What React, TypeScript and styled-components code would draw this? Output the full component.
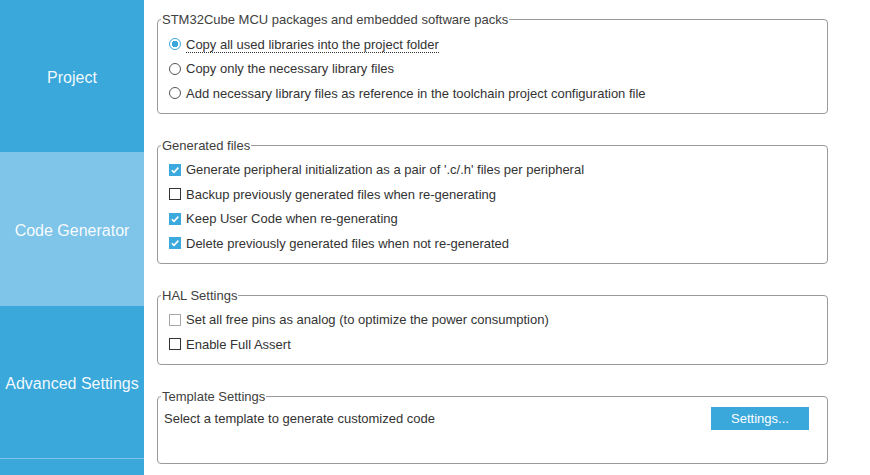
import React from 'react';
import styled, { createGlobalStyle } from 'styled-components';

const GlobalStyle = createGlobalStyle`
  html, body {
    margin: 0;
    padding: 0;
    background: #ffffff;
    font-family: "Liberation Sans", Arial, sans-serif;
  }
`;

const BLUE = '#3aa8db';
const LIGHT_BLUE = '#7fc5e9';

const Page = styled.div`
  display: flex;
  width: 870px;
  height: 475px;
  overflow: hidden;
`;

const Sidebar = styled.nav`
  flex: 0 0 144px;
  display: flex;
  flex-direction: column;
  background: ${BLUE};
`;

const Tab = styled.div<{ $active?: boolean }>`
  flex: 0 0 153px;
  box-sizing: border-box;
  display: flex;
  align-items: center;
  justify-content: center;
  padding-top: 4px;
  background: ${(p) => (p.$active ? LIGHT_BLUE : BLUE)};
  border-bottom: 1px solid ${LIGHT_BLUE};
  color: rgba(255, 255, 255, 0.95);
  font-size: 16px;
  white-space: nowrap;
`;

const Content = styled.main`
  flex: 1;
  display: flex;
  flex-direction: column;
  gap: 24px;
  padding: 12px 42px 0 13px;
  border-top: 1px solid ${BLUE};
  margin-top: -1px;
`;

const Group = styled.fieldset`
  margin: 0;
  padding: 0;
  min-width: 0;
  border: 1px solid #9a9a9a;
  border-radius: 4px;
`;

const Legend = styled.legend`
  margin-left: 3px;
  padding: 0 1px;
  font-size: 13px;
  line-height: 15px;
  color: #404040;
`;

const Body = styled.div`
  padding: 5px 11px 7px;
`;

const TemplateBody = styled.div`
  display: flex;
  align-items: center;
  justify-content: space-between;
  height: 24.5px;
  padding: 3px 18px 32px 6px;
`;

const Row = styled.div`
  display: flex;
  align-items: center;
  gap: 5px;
  height: 24.5px;
`;

const Label = styled.span<{ $focused?: boolean }>`
  font-size: 13px;
  line-height: 15px;
  color: #333333;
  white-space: nowrap;
  border-bottom: 1px dotted ${(p) => (p.$focused ? '#333333' : 'transparent')};
  margin-bottom: -1px;
`;

const Radio = styled.span<{ $checked?: boolean }>`
  flex: 0 0 12px;
  width: 12px;
  height: 12px;
  box-sizing: border-box;
  border-radius: 50%;
  border: 1px solid ${(p) => (p.$checked ? BLUE : '#555555')};
  background: ${(p) =>
    p.$checked ? `radial-gradient(circle, ${BLUE} 0 3px, #ffffff 3.5px)` : '#ffffff'};
`;

const Box = styled.span<{ $checked?: boolean; $muted?: boolean }>`
  flex: 0 0 12px;
  width: 12px;
  height: 12px;
  box-sizing: border-box;
  display: flex;
  align-items: center;
  justify-content: center;
  background: ${(p) => (p.$checked ? '#3ba9dd' : '#ffffff')};
  border: 1px solid
    ${(p) => (p.$checked ? '#3ba9dd' : p.$muted ? '#a8a8a8' : '#333333')};
`;

const Button = styled.button`
  width: 98px;
  height: 23px;
  border: none;
  padding: 0;
  background: ${BLUE};
  color: #ffffff;
  font-family: "Liberation Sans", Arial, sans-serif;
  font-size: 13px;
`;

const Check: React.FC<{ checked?: boolean; muted?: boolean; label: string }> = ({
  checked,
  muted,
  label,
}) => (
  <Row>
    <Box $checked={checked} $muted={muted}>
      {checked && (
        <svg width="10" height="10" viewBox="0 0 10 10">
          <path d="M1.8 5.2 L4 7.4 L8.4 2.6" fill="none" stroke="#ffffff" strokeWidth="1.6" />
        </svg>
      )}
    </Box>
    <Label>{label}</Label>
  </Row>
);

const RadioRow: React.FC<{ checked?: boolean; focused?: boolean; label: string }> = ({
  checked,
  focused,
  label,
}) => (
  <Row>
    <Radio $checked={checked} />
    <Label $focused={focused}>{label}</Label>
  </Row>
);

export default function App() {
  return (
    <>
      <GlobalStyle />
      <Page>
        <Sidebar>
          <Tab>Project</Tab>
          <Tab $active>Code Generator</Tab>
          <Tab>Advanced Settings</Tab>
          <Tab />
        </Sidebar>
        <Content>
          <Group>
            <Legend>STM32Cube MCU packages and embedded software packs</Legend>
            <Body>
              <RadioRow checked focused label="Copy all used libraries into the project folder" />
              <RadioRow label="Copy only the necessary library files" />
              <RadioRow label="Add necessary library files as reference in the toolchain project configuration file" />
            </Body>
          </Group>
          <Group>
            <Legend>Generated files</Legend>
            <Body>
              <Check checked label="Generate peripheral initialization as a pair of '.c/.h' files per peripheral" />
              <Check label="Backup previously generated files when re-generating" />
              <Check checked label="Keep User Code when re-generating" />
              <Check checked label="Delete previously generated files when not re-generated" />
            </Body>
          </Group>
          <Group>
            <Legend>HAL Settings</Legend>
            <Body>
              <Check muted label="Set all free pins as analog (to optimize the power consumption)" />
              <Check label="Enable Full Assert" />
            </Body>
          </Group>
          <Group>
            <Legend>Template Settings</Legend>
            <TemplateBody>
              <Label>Select a template to generate customized code</Label>
              <Button>Settings...</Button>
            </TemplateBody>
          </Group>
        </Content>
      </Page>
    </>
  );
}
